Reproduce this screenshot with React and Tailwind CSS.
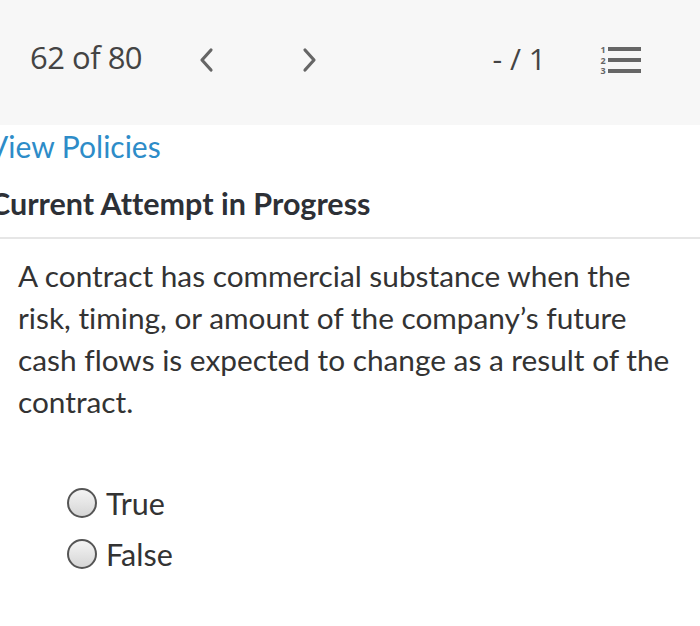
export default function App() {
  return (
    <div className="w-[700px] h-[626px] bg-white overflow-hidden [font-variant-ligatures:none]" style={{ fontFamily: 'Lato, "Liberation Sans", sans-serif' }}>
      <header className="h-[125px] bg-[#f7f7f7] flex items-center text-[#444]" style={{ fontFamily: '"Open Sans", "Liberation Sans", sans-serif' }}>
        <div className="pl-[30px] w-[190px] text-[31px] tracking-[-0.5px] pb-[10px]">62 of 80</div>
        <div className="flex items-center gap-[80px] pb-[6px] ml-[6px]">
          <svg width="22" height="26" viewBox="0 0 22 26"><path d="M15 3 L6 13 L15 23" fill="none" stroke="#666" strokeWidth="3.2" strokeLinecap="round" strokeLinejoin="round" /></svg>
          <svg width="22" height="26" viewBox="0 0 22 26"><path d="M7 3 L16 13 L7 23" fill="none" stroke="#666" strokeWidth="3.2" strokeLinecap="round" strokeLinejoin="round" /></svg>
        </div>
        <div className="ml-auto pr-[58px] flex items-center gap-[54px] pb-[8px]">
          <div className="text-[30px] text-[#444]">- / 1</div>
          <svg width="42" height="30" viewBox="0 0 42 30">
            <text x="0.5" y="8.5" fontSize="9" fill="#666" fontFamily="Open Sans, sans-serif" fontWeight="700">1</text>
            <text x="0.5" y="19.5" fontSize="9" fill="#666" fontFamily="Open Sans, sans-serif" fontWeight="700">2</text>
            <text x="0.5" y="29.5" fontSize="9" fill="#666" fontFamily="Open Sans, sans-serif" fontWeight="700">3</text>
            <rect x="8" y="3" width="33" height="4" fill="#666" />
            <rect x="8" y="14" width="33" height="4" fill="#666" />
            <rect x="8" y="25" width="33" height="4" fill="#666" />
          </svg>
        </div>
      </header>
      <div className="ml-[-12px] mt-[1px] text-[30px] leading-[40px] text-[#2d8cc8]">View Policies</div>
      <div className="ml-[-10px] mt-[17px] text-[30.5px] leading-[40px] font-bold text-[#2d3036]">Current Attempt in Progress</div>
      <div className="mt-[14px] border-t-2 border-[#e6e6e6]"></div>
      <p className="pl-[18px] pt-[16px] text-[29.8px] leading-[42px] text-[#333] whitespace-nowrap">
        A contract has commercial substance when the<br />
        risk, timing, or amount of the company’s future<br />
        cash flows is expected to change as a result of the<br />
        contract.
      </p>
      <div className="mt-[64px] pl-[67px] flex flex-col gap-[19px]">
        {['True', 'False'].map((t) => (
          <label key={t} className="flex items-center gap-[9px] text-[30.5px] leading-[32px] text-[#333]">
            <span className="w-[30px] h-[30px] rounded-full border-[2.5px] border-[#555] bg-gradient-to-b from-[#f4f4f4] to-[#d6d6d6]"></span>
            {t}
          </label>
        ))}
      </div>
    </div>
  );
}
